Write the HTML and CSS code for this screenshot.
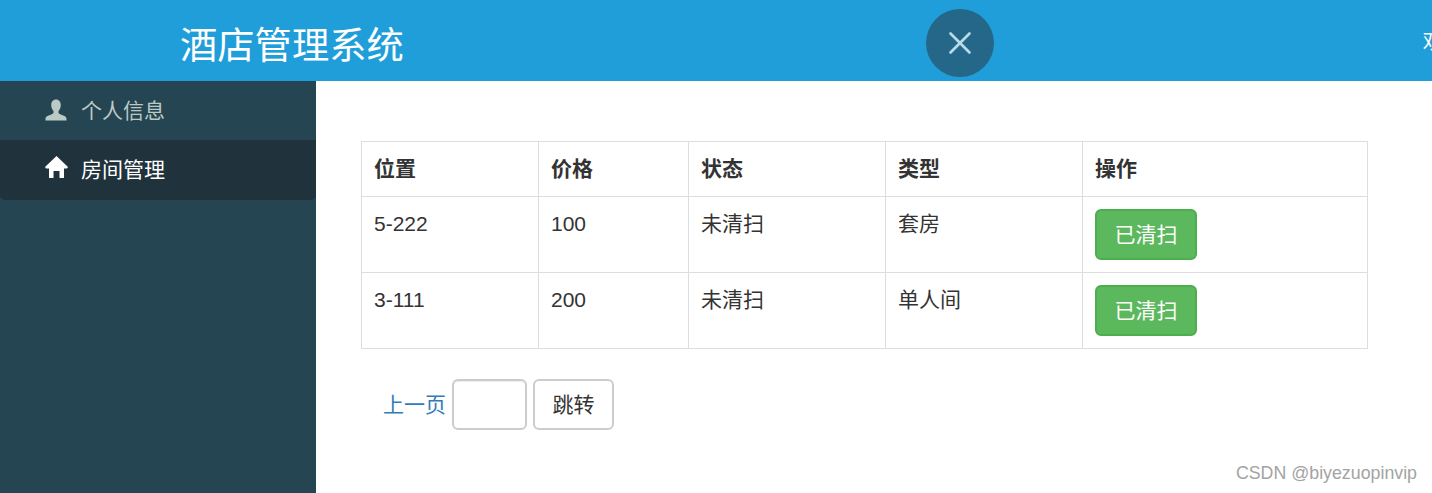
FILE: index.html
```html
<!doctype html>
<html lang="zh">
<head>
<meta charset="utf-8">
<title>酒店管理系统</title>
<link rel="stylesheet" href="styles.css">
</head>
<body>
    <header class="topbar">
        <h1 class="brand">酒店管理系统</h1>
        <span class="welcome">欢迎您</span>
    </header>
    <button class="close-btn" type="button" aria-label="关闭">
        <svg width="24" height="24" viewBox="0 0 24 24"><path d="M2.5 2.5 L21.5 21.5 M21.5 2.5 L2.5 21.5" stroke="#b9dcea" stroke-width="2.6" stroke-linecap="round" fill="none"/></svg>
    </button>
    <div class="layout">
        <nav class="sidebar">
            <a class="nav-item" href="#">
                <svg class="nav-icon" width="23" height="23" viewBox="0 0 23 23"><path fill="currentColor" d="M11 0.5c3 0 4.8 2.4 4.8 5.6 0 2.4-1 4.7-2.3 6v1.6c0 1 2.8 1.8 5.4 3 1.6.7 2.6 1.5 2.6 3v1.8H0.5v-1.8c0-1.5 1-2.3 2.6-3 2.6-1.2 5.4-2 5.4-3v-1.6c-1.3-1.3-2.3-3.6-2.3-6 0-3.2 1.8-5.6 4.8-5.6z"/></svg>
                个人信息
            </a>
            <a class="nav-item active" href="#">
                <svg class="nav-icon" width="23" height="23" viewBox="0 0 23 23"><path fill="currentColor" d="M11.5 0 L23 11 L22 12.5 H19 V22 H14.5 V15 H8.5 V22 H4 V12.5 H1 L0 11 Z"/></svg>
                房间管理
            </a>
        </nav>
        <main class="content">
            <table class="room-table">
                <thead>
                    <tr>
                        <th class="col-place">位置</th>
                        <th class="col-price">价格</th>
                        <th class="col-state">状态</th>
                        <th class="col-type">类型</th>
                        <th>操作</th>
                    </tr>
                </thead>
                <tbody>
                    <tr>
                        <td>5-222</td>
                        <td>100</td>
                        <td>未清扫</td>
                        <td>套房</td>
                        <td><button class="btn btn-success" type="button">已清扫</button></td>
                    </tr>
                    <tr>
                        <td>3-111</td>
                        <td>200</td>
                        <td>未清扫</td>
                        <td>单人间</td>
                        <td><button class="btn btn-success" type="button">已清扫</button></td>
                    </tr>
                </tbody>
            </table>
            <div class="pager">
                <a href="#">上一页</a>
                <input class="page-input" type="text">
                <button class="btn btn-default" type="button">跳转</button>
            </div>
        </main>
    </div>
    <div class="watermark">CSDN @biyezuopinvip</div>
</body>
</html>
```

FILE: styles.css
```css
html, body {
    margin: 0;
    height: 493px;
    overflow: hidden;
}
body {
    position: relative;
    background: #fff;
    color: #333;
    font-family: "Liberation Sans", "Noto Sans CJK SC", sans-serif;
    font-size: 21px;
    line-height: 30px;
}
a {
    text-decoration: none;
}

.topbar {
    display: flex;
    align-items: center;
    height: 81px;
    padding-left: 180px;
    background: #209eda;
    color: #fff;
    white-space: nowrap;
    overflow: hidden;
}
.brand {
    margin: 12px 0 0;
    font-size: 37.3px;
    font-weight: normal;
    line-height: 1;
}
.welcome {
    margin-left: 1019px;
}
.close-btn {
    position: absolute;
    left: 926px;
    top: 9px;
    display: flex;
    align-items: center;
    justify-content: center;
    width: 68px;
    height: 68px;
    padding: 0;
    border: none;
    border-radius: 50%;
    background: #246789;
}

.layout {
    display: flex;
    height: 412px;
}
.sidebar {
    flex: none;
    width: 316px;
    background: #254553;
}
.nav-item {
    display: flex;
    align-items: center;
    gap: 13px;
    height: 59px;
    padding-left: 45px;
    color: #bccac5;
}
.nav-item.active {
    height: 60px;
    border-radius: 0 0 5px 5px;
    background: #20323c;
    color: #fff;
}
.nav-icon {
    flex: none;
    margin-top: -1px;
}
.active .nav-icon {
    margin-top: -5px;
}

.content {
    flex: 1;
    padding: 60px 64px 0 45px;
}
.room-table {
    width: 1007px;
    border-collapse: collapse;
    table-layout: fixed;
}
.room-table th, .room-table td {
    box-sizing: border-box;
    padding: 12px;
    border: 1.5px solid #ddd;
    text-align: left;
    vertical-align: top;
}
.room-table th {
    font-weight: bold;
}
.col-place { width: 177px; }
.col-price { width: 150px; }
.col-state { width: 197px; }
.col-type { width: 197px; }

.btn {
    box-sizing: border-box;
    height: 51px;
    padding: 0;
    border: 2px solid;
    border-radius: 6px;
    font: inherit;
}
.btn-success {
    width: 102px;
    background: #5cb85c;
    border-color: #4cae4c;
    color: #fff;
}
.btn-default {
    width: 81px;
    background: #fff;
    border-color: #ccc;
    color: #333;
}

.pager {
    display: flex;
    align-items: center;
    gap: 6px;
    margin-top: 30px;
    padding-left: 22px;
}
.pager a {
    color: #337ab7;
}
.page-input {
    box-sizing: border-box;
    width: 75px;
    height: 51px;
    border: 2px solid #ccc;
    border-radius: 6px;
    background: #fff;
    box-shadow: inset 0 1px 1px rgba(0, 0, 0, .075);
}

.watermark {
    position: absolute;
    right: 15px;
    bottom: 8px;
    color: #a3a3a3;
    font-size: 17.8px;
    line-height: 24px;
}
```
